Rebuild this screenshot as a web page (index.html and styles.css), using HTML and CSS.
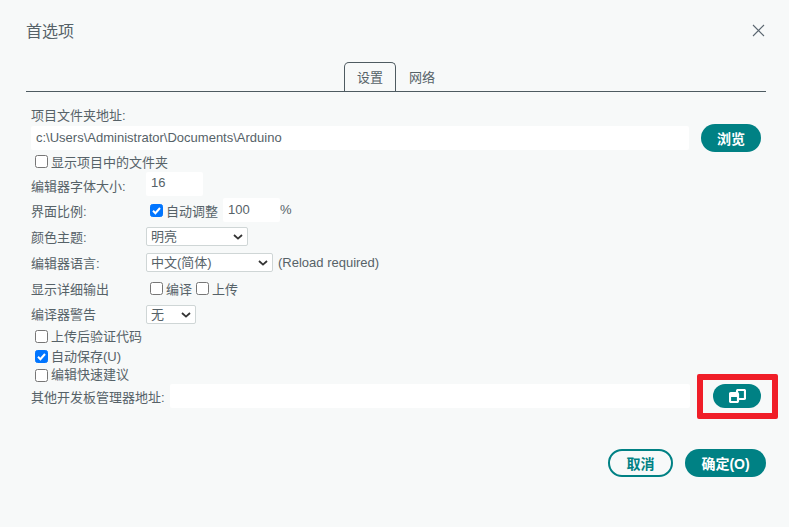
FILE: index.html
```html
<!DOCTYPE html>
<html lang="zh-CN">
<head>
<meta charset="utf-8">
<title>首选项</title>
<link rel="stylesheet" href="styles.css">
</head>
<body>
<div class="dialog">
  <header class="head">
    <h1 class="title">首选项</h1>
    <svg class="close" width="13" height="13" viewBox="0 0 13 13"><path d="M1 1l11 11M12 1L1 12" stroke="#5a6670" stroke-width="1.1" fill="none"/></svg>
  </header>
  <nav class="tabs">
    <span class="tab active">设置</span>
    <span class="tab">网络</span>
  </nav>
  <main class="form">
    <div class="label-top">项目文件夹地址:</div>
    <div class="path-row">
      <div class="input path">c:\Users\Administrator\Documents\Arduino</div>
      <button class="btn solid browse">浏览</button>
    </div>
    <label class="check-line first"><span class="cb"></span>显示项目中的文件夹</label>
    <div class="row r-font"><span class="lbl">编辑器字体大小:</span><div class="input num">16</div></div>
    <div class="row r-scale"><span class="lbl">界面比例:</span>
      <label class="inline-check"><span class="cb on"><svg viewBox="0 0 13 13"><path d="M3 6.8l2.4 2.4L10 4" stroke="#fff" stroke-width="2" fill="none"/></svg></span>自动调整</label>
      <div class="input num scale">100</div><span class="pct">%</span>
    </div>
    <div class="row r-theme"><span class="lbl">颜色主题:</span><div class="select w-theme">明亮<svg class="chev" viewBox="0 0 10 6"><path d="M1 1l4 3.6L9 1" stroke="#333" stroke-width="1.8" fill="none"/></svg></div></div>
    <div class="row r-lang"><span class="lbl">编辑器语言:</span><div class="select w-lang">中文(简体)<svg class="chev" viewBox="0 0 10 6"><path d="M1 1l4 3.6L9 1" stroke="#333" stroke-width="1.8" fill="none"/></svg></div><span class="note">(Reload required)</span></div>
    <div class="row r-verbose"><span class="lbl">显示详细输出</span>
      <label class="inline-check"><span class="cb"></span>编译</label>
      <label class="inline-check"><span class="cb"></span>上传</label>
    </div>
    <div class="row r-warn"><span class="lbl">编译器警告</span><div class="select w-warn">无<svg class="chev" viewBox="0 0 10 6"><path d="M1 1l4 3.6L9 1" stroke="#333" stroke-width="1.8" fill="none"/></svg></div></div>
    <label class="check-line cl-verify"><span class="cb"></span>上传后验证代码</label>
    <label class="check-line cl-save"><span class="cb on"><svg viewBox="0 0 13 13"><path d="M3 6.8l2.4 2.4L10 4" stroke="#fff" stroke-width="2" fill="none"/></svg></span>自动保存(U)</label>
    <label class="check-line cl-hint"><span class="cb"></span>编辑快速建议</label>
    <div class="board-row">
      <span class="lbl-board">其他开发板管理器地址:</span>
      <div class="input board"></div>
      <div class="highlight">
        <button class="btn solid icon-btn"><svg width="17" height="14" viewBox="0 0 17 14"><path d="M8 4V2a1 1 0 0 1 1-1h6a1 1 0 0 1 1 1v7a1 1 0 0 1-1 1h-6" stroke="#fff" stroke-width="2.2" fill="none"/><rect x="1" y="4" width="8" height="9" rx="1" fill="none" stroke="#fff" stroke-width="2.2"/><rect x="1" y="4" width="8" height="4" fill="#fff"/></svg></button>
      </div>
    </div>
  </main>
  <footer class="foot">
    <button class="btn outline">取消</button>
    <button class="btn solid ok">确定(O)</button>
  </footer>
</div>
</body>
</html>
```
FILE: styles.css
```css
* { box-sizing: border-box; }
html, body { margin: 0; padding: 0; }
body {
  width: 789px;
  height: 527px;
  overflow: hidden;
  background: #f7f9f9;
  color: #566268;
  font-family: "Liberation Sans", "Noto Sans CJK SC", sans-serif;
  font-size: 13px;
}
.dialog { padding: 0 23px 0 26px; }
.head { height: 62px; display: flex; justify-content: space-between; align-items: flex-start; padding-top: 22px; }
.title { margin: 0; font-size: 16px; font-weight: 400; line-height: 20px; color: #566268; }
.close { margin-top: 2px; margin-right: 1px; }
.tabs { height: 30px; border-bottom: 1px solid #4e5b61; display: flex; padding-left: 318px; }
.tab { width: 52px; height: 30px; line-height: 32px; text-align: center; }
.tab.active { border: 1px solid #4e5b61; border-bottom: 0; border-radius: 5px 5px 0 0; line-height: 30px; }
.form { padding: 16px 0 0 5px; }
.label-top { height: 16px; line-height: 16px; }
.path-row { display: flex; align-items: center; height: 28px; }
.input { background: #fff; border-radius: 2px; height: 24px; line-height: 23px; padding: 0 5px; color: #566268; }
.path { width: 658px; }
.browse { margin-left: 12px; width: 60px; height: 28px; }
.btn { border-radius: 15px; font-family: inherit; font-size: 14px; font-weight: 700; padding: 0; border: 0; display: flex; align-items: center; justify-content: center; }
.solid { background: #008184; color: #fff; }
.outline { background: transparent; border: 2px solid #008184; color: #008184; width: 65px; height: 28px; }
.ok { width: 81px; height: 28px; }
.check-line { display: flex; align-items: center; padding-left: 4px; }
.check-line.first { height: 19px; }
.cl-verify { height: 19px; margin-top: 3px; padding-bottom: 2px; }
.cl-save { height: 20px; padding-bottom: 2px; }
.cl-hint { height: 18px; padding-bottom: 4px; }
.cb { width: 13px; height: 13px; border: 1px solid #767676; border-radius: 2.5px; margin-right: 3px; background: #fff; flex: none; display: block; }
.cl-verify .cb, .cl-save .cb { margin-top: 2px; }
.cl-hint .cb { margin-top: 4px; }
.cb.on { background: #0075ff; border-color: #0075ff; position: relative; }
.cb svg { position: absolute; left: -1px; top: -1px; width: 13px; height: 13px; }
.row { display: flex; align-items: center; }
.lbl { width: 115px; flex: none; }
.r-font .lbl { padding-top: 3px; }
.r-font .input { line-height: 22px; }
.r-scale .lbl { padding-top: 1px; }
.r-warn .lbl { padding-bottom: 2px; }
.r-font { height: 24px; margin-top: 1px; }
.num { width: 57px; }
.r-scale { height: 24px; margin-top: 2px; }
.r-theme { height: 19px; margin-top: 5px; }
.r-lang { height: 19px; margin-top: 7px; }
.r-verbose { height: 22px; margin-top: 5px; }
.r-warn { height: 19px; margin-top: 6px; }
.inline-check { display: flex; align-items: center; margin-left: 4px; margin-right: 4px; }
.inline-check + .inline-check { margin-left: 0; }
.r-scale .inline-check { margin-right: 5px; }
.pct { margin-top: -1px; }
.select { height: 19px; border: 1px solid #cfd6d6; border-radius: 2px; background: #fff; display: flex; align-items: center; justify-content: space-between; padding: 0 4px; color: #566268; line-height: 17px; }
.chev { width: 10px; height: 6px; }
.w-theme { width: 102px; }
.w-lang { width: 127px; }
.w-warn { width: 50px; }
.note { margin-left: 5px; }
.board-row { display: flex; align-items: center; height: 24px; position: relative; }
.lbl-board { width: 139px; flex: none; }
.board { width: 520px; }
.highlight { position: absolute; left: 666px; top: -10px; width: 81px; height: 45px; border: 6px solid #f01e28; border-radius: 2px; padding: 4px 0 0 10px; }
.icon-btn { width: 48px; height: 24px; }
.foot { display: flex; justify-content: flex-end; gap: 12px; margin-top: 41px; }
```
